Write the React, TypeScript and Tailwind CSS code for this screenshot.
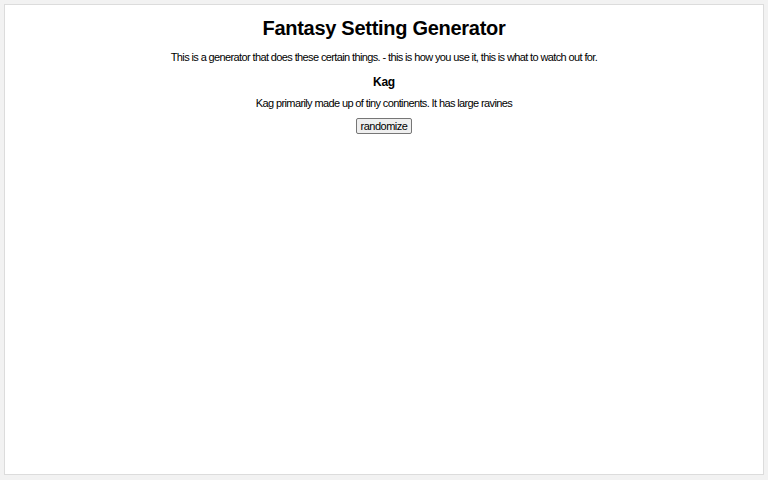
export default function App() {
  return (
    <div className="w-[768px] h-[480px] bg-[#f2f2f2] p-[4px]" style={{ fontFamily: '"Liberation Sans", Arial, sans-serif' }}>
      <div className="h-[471px] bg-white border border-[#dcdcdc] flex flex-col items-center text-black">
        <h1 className="mt-[11px] text-[20px] leading-[24px] font-bold tracking-[-0.28px]">Fantasy Setting Generator</h1>
        <p className="mt-[10px] text-[11px] leading-[14px] tracking-[-0.62px]">
          This is a generator that does these certain things. - this is how you use it, this is what to watch out for.
        </p>
        <h2 className="mt-[10px] text-[12px] leading-[16px] font-bold tracking-[-0.3px]">Kag</h2>
        <p className="mt-[6px] text-[11px] leading-[14px] tracking-[-0.62px]">Kag primarily made up of tiny continents. It has large ravines</p>
        <button className="mt-[8px] text-[11px] leading-[12px] tracking-[-0.5px] px-[4px] py-[1px] bg-[#efefef] border border-[#767676] rounded-[2px]">
          randomize
        </button>
      </div>
    </div>
  );
}
